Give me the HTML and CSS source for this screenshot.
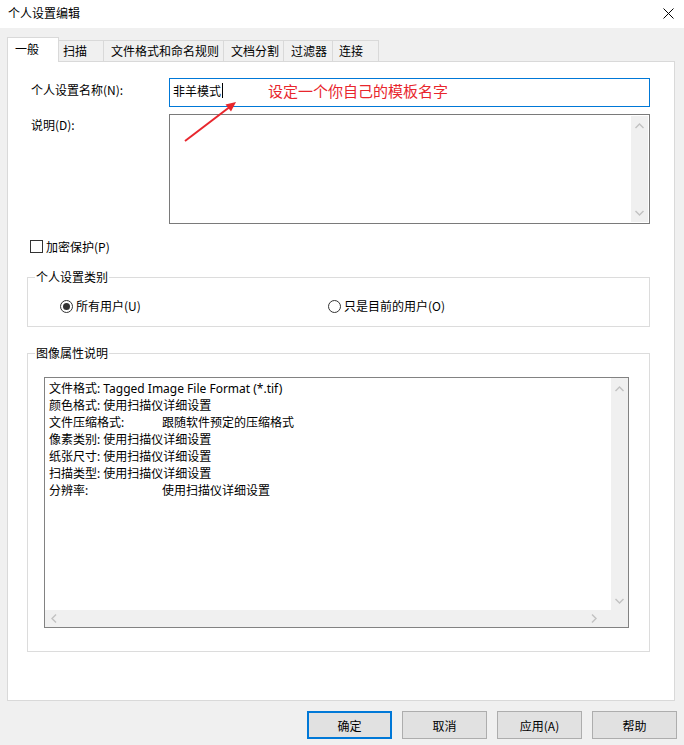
FILE: index.html
```html
<!DOCTYPE html>
<html lang="zh-CN">
<head>
  <meta charset="UTF-8">
  <title>个人设置编辑</title>
  <link rel="stylesheet" href="styles.css">
</head>
<body>

  <div class="titlebar">
    <span class="title">个人设置编辑</span>
    <svg class="close-btn" width="11" height="11" viewBox="0 0 11 11">
      <path d="M0.5 0.5 L10.5 10.5 M10.5 0.5 L0.5 10.5" stroke="#000" stroke-width="1" fill="none"/>
    </svg>
  </div>

  <div class="tabs">
    <div class="tab tab-active">一般</div>
    <div class="tab tab-scan">扫描</div>
    <div class="tab tab-naming">文件格式和命名规则</div>
    <div class="tab tab-split">文档分割</div>
    <div class="tab tab-filter">过滤器</div>
    <div class="tab tab-link">连接</div>
  </div>

  <div class="panel">
    <div class="field-row">
      <label class="field-label">个人设置名称(N):</label>
      <div class="textbox">
        <span class="value">非羊模式</span><span class="caret"></span>
        <span class="hint">设定一个你自己的模板名字</span>
      </div>
    </div>

    <div class="field-row desc-row">
      <label class="field-label">说明(D):</label>
      <div class="memo">
        <div class="memo-body"></div>
        <div class="vscroll">
          <svg width="9" height="6" viewBox="0 0 9 6"><polyline points="0.5,5 4.5,1 8.5,5" fill="none" stroke="#c2c2c2" stroke-width="1.4"/></svg>
          <svg width="9" height="6" viewBox="0 0 9 6"><polyline points="0.5,1 4.5,5 8.5,1" fill="none" stroke="#c2c2c2" stroke-width="1.4"/></svg>
        </div>
      </div>
    </div>

    <div class="check-row">
      <span class="checkbox"></span>
      <span>加密保护(P)</span>
    </div>

    <fieldset class="group group-type">
      <legend>个人设置类别</legend>
      <div class="radio-row">
        <div class="radio-item radio-first"><span class="radio radio-on"></span>所有用户(U)</div>
        <div class="radio-item"><span class="radio"></span>只是目前的用户(O)</div>
      </div>
    </fieldset>

    <fieldset class="group group-props">
      <legend>图像属性说明</legend>
      <div class="listbox">
        <div class="list-text">
          <div>文件格式: Tagged Image File Format (*.tif)</div>
          <div>颜色格式: 使用扫描仪详细设置</div>
          <div><span class="key-wide">文件压缩格式:</span>跟随软件预定的压缩格式</div>
          <div>像素类别: 使用扫描仪详细设置</div>
          <div>纸张尺寸: 使用扫描仪详细设置</div>
          <div>扫描类型: 使用扫描仪详细设置</div>
          <div><span class="key-wide">分辨率:</span>使用扫描仪详细设置</div>
        </div>
        <div class="vscroll">
          <svg width="9" height="6" viewBox="0 0 9 6"><polyline points="0.5,5 4.5,1 8.5,5" fill="none" stroke="#c2c2c2" stroke-width="1.4"/></svg>
          <svg width="9" height="6" viewBox="0 0 9 6"><polyline points="0.5,1 4.5,5 8.5,1" fill="none" stroke="#c2c2c2" stroke-width="1.4"/></svg>
        </div>
        <div class="hscroll">
          <svg width="6" height="9" viewBox="0 0 6 9"><polyline points="5,0.5 1,4.5 5,8.5" fill="none" stroke="#c2c2c2" stroke-width="1.4"/></svg>
          <svg width="6" height="9" viewBox="0 0 6 9"><polyline points="1,0.5 5,4.5 1,8.5" fill="none" stroke="#c2c2c2" stroke-width="1.4"/></svg>
        </div>
        <div class="corner"></div>
      </div>
    </fieldset>

    <!-- red annotation arrow pointing at the name box -->
    <svg class="arrow" width="64" height="52" viewBox="0 0 64 52">
      <line x1="7" y1="46" x2="51" y2="12.5" stroke="#e8262d" stroke-width="2"/>
      <polygon points="58,7 53,16.5 47.5,9.5" fill="#e8262d"/>
    </svg>
  </div>

  <div class="buttons">
    <button class="btn btn-default">确定</button>
    <button class="btn">取消</button>
    <button class="btn">应用(A)</button>
    <button class="btn">帮助</button>
  </div>

</body>
</html>
```

FILE: styles.css
```css
* {
  margin: 0;
  padding: 0;
  box-sizing: border-box;
}

html, body {
  width: 684px;
  height: 745px;
  overflow: hidden;
}

body {
  background-color: #f0f0f0;
  font-family: "Noto Sans CJK SC", sans-serif;
  font-size: 12px;
  line-height: 16px;
  color: #000;
}

.titlebar {
  height: 28px;
  background-color: #ffffff;
  display: flex;
  align-items: center;
  justify-content: space-between;
  padding: 0 10px 2px 8px;
}

.title {
  font-size: 12px;
}

/* tabs */
.tabs {
  display: flex;
  align-items: flex-start;
  padding: 9px 0 0 7px;
  height: 33px;
}

.tab {
  position: relative;
  height: 21px;
  margin-top: 3px;
  padding-left: 7px;
  line-height: 19px;
  background-color: #f0f0f0;
  border-top: 1px solid #d9d9d9;
  border-right: 1px solid #d9d9d9;
  white-space: nowrap;
}

.tab-active {
  z-index: 2;
  height: 25px;
  margin-top: 0;
  width: 52px;
  padding-left: 7px;
  line-height: 22px;
  background-color: #ffffff;
  border-left: 1px solid #d9d9d9;
}

.tab-scan { width: 45px; padding-left: 4px; }
.tab-naming { width: 120px; }
.tab-split { width: 60px; }
.tab-filter { width: 49px; }
.tab-link { width: 46px; padding-left: 6px; }

/* main page */
.panel {
  position: relative;
  margin: 0 9px 0 7px;
  height: 640px;
  background-color: #ffffff;
  border: 1px solid #d9d9d9;
  padding: 16px 24px 0 23px;
}

.field-row {
  display: flex;
  align-items: flex-start;
}

.field-label {
  width: 138px;
  padding-top: 4px;
  flex-shrink: 0;
}

.textbox {
  flex: 1;
  height: 29px;
  border: 1px solid #0078d7;
  display: flex;
  align-items: center;
  padding: 0 0 4px 3px;
}

.caret {
  display: inline-block;
  width: 1px;
  height: 15px;
  background-color: #000;
  margin-left: 1px;
}

.hint {
  margin-left: 45px;
  font-size: 15px;
  color: #e8262d;
}

.desc-row {
  margin-top: 7px;
}

.desc-row .field-label {
  padding-top: 3px;
}

.memo {
  flex: 1;
  height: 110px;
  border: 1px solid #7a7a7a;
  padding: 1px;
  display: flex;
}

.memo-body {
  flex: 1;
}

.vscroll {
  width: 17px;
  background-color: #f0f0f0;
  display: flex;
  flex-direction: column;
  justify-content: space-between;
  align-items: center;
  padding: 7px 0 6px;
}

.check-row {
  display: flex;
  align-items: center;
  margin: 16px 0 0 -1px;
  height: 13px;
}

.checkbox {
  width: 13px;
  height: 13px;
  border: 1px solid #333;
  margin-right: 3px;
}

/* group boxes */
.group {
  margin-left: -4px;
  border: 1px solid #dcdcdc;
  min-width: 0;
  padding: 0;
}

.group legend {
  margin-left: 7px;
  padding: 0 1px;
  line-height: 16px;
}

.group-type {
  margin-top: 16px;
}

.radio-row {
  display: flex;
  height: 16px;
  align-items: center;
  margin: 13px 0 12px 32px;
}

.radio-item {
  display: flex;
  align-items: center;
}

.radio-first {
  width: 268px;
}

.radio {
  width: 13px;
  height: 13px;
  border: 1px solid #333;
  border-radius: 50%;
  margin-right: 3px;
  display: flex;
  align-items: center;
  justify-content: center;
}

.radio-on::after {
  content: "";
  width: 7px;
  height: 7px;
  border-radius: 50%;
  background-color: #333;
}

.group-props {
  margin-top: 18px;
}

.listbox {
  height: 251px;
  margin: 16px 20px 23px 16px;
  border: 1px solid #828282;
  display: grid;
  grid-template-columns: 1fr 17px;
  grid-template-rows: 1fr 17px;
}

.list-text {
  padding: 2px 4px;
  line-height: 17px;
  font-family: "Noto Sans", "Noto Sans CJK SC", sans-serif;
  white-space: nowrap;
  overflow: hidden;
}

.key-wide {
  display: inline-block;
  width: 113px;
}

.listbox .vscroll {
  padding: 8px 0 6px;
}

.hscroll {
  background-color: #f0f0f0;
  display: flex;
  justify-content: space-between;
  align-items: center;
  padding: 0 14px 0 6px;
}

.corner {
  background-color: #f0f0f0;
}

.arrow {
  position: absolute;
  left: 170px;
  top: 33px;
}

/* dialog buttons */
.buttons {
  display: flex;
  justify-content: flex-end;
  gap: 10px;
  padding: 10px 7px 0 0;
}

.btn {
  width: 85px;
  height: 28px;
  background-color: #e1e1e1;
  border: 1px solid #adadad;
  font-family: "Noto Sans CJK SC", sans-serif;
  font-size: 12px;
  color: #000;
}

.btn-default {
  border: 2px solid #0078d7;
}
```
